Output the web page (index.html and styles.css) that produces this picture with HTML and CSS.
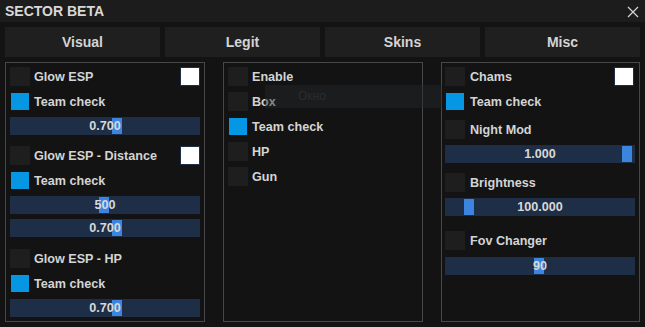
FILE: index.html
```html
<!DOCTYPE html>
<html lang="en">
  <head>
    <meta charset="UTF-8" />
    <meta name="viewport" content="width=device-width, initial-scale=1.0" />
    <title>SECTOR BETA</title>
    <link rel="stylesheet" href="styles.css">
  </head>
  <body>
    <div class="window">
      <div class="titlebar">
        <span class="title">SECTOR BETA</span>
        <svg class="close" width="12" height="12" viewBox="0 0 12 12">
          <path d="M1 1 L11 11 M11 1 L1 11" stroke="#d6d6d6" stroke-width="1.2" fill="none" />
        </svg>
      </div>

      <div class="tabs">
        <div class="tab">Visual</div>
        <div class="tab">Legit</div>
        <div class="tab">Skins</div>
        <div class="tab">Misc</div>
      </div>

      <div class="panels">
        <!-- левая колонка -->
        <div class="panel left">
          <div class="row">
            <span class="box"></span><span class="label">Glow ESP</span>
            <span class="swatch"></span>
          </div>
          <div class="row">
            <span class="box on"></span><span class="label">Team check</span>
          </div>
          <div class="slider"><span class="grab" style="left: 102px"></span><span class="value">0.700</span></div>

          <div class="row group">
            <span class="box"></span><span class="label">Glow ESP - Distance</span>
            <span class="swatch"></span>
          </div>
          <div class="row">
            <span class="box on"></span><span class="label">Team check</span>
          </div>
          <div class="slider"><span class="grab" style="left: 89px"></span><span class="value">500</span></div>
          <div class="slider next"><span class="grab" style="left: 102px"></span><span class="value">0.700</span></div>

          <div class="row group last">
            <span class="box"></span><span class="label">Glow ESP - HP</span>
          </div>
          <div class="row">
            <span class="box on"></span><span class="label">Team check</span>
          </div>
          <div class="slider"><span class="grab" style="left: 102px"></span><span class="value">0.700</span></div>
        </div>

        <!-- средняя колонка -->
        <div class="panel middle">
          <div class="row"><span class="box"></span><span class="label">Enable</span></div>
          <div class="row"><span class="box"></span><span class="label">Box</span></div>
          <div class="row"><span class="box on"></span><span class="label">Team check</span></div>
          <div class="row"><span class="box"></span><span class="label">HP</span></div>
          <div class="row"><span class="box"></span><span class="label">Gun</span></div>
        </div>

        <!-- правая колонка -->
        <div class="panel right">
          <div class="row">
            <span class="box"></span><span class="label">Chams</span>
            <span class="swatch"></span>
          </div>
          <div class="row"><span class="box on"></span><span class="label">Team check</span></div>
          <div class="row night"><span class="box"></span><span class="label">Night Mod</span></div>
          <div class="slider"><span class="grab" style="left: 177px"></span><span class="value">1.000</span></div>
          <div class="row bright"><span class="box"></span><span class="label">Brightness</span></div>
          <div class="slider"><span class="grab" style="left: 19px"></span><span class="value">100.000</span></div>
          <div class="row fov"><span class="box"></span><span class="label">Fov Changer</span></div>
          <div class="slider fov-slider"><span class="grab" style="left: 89px"></span><span class="value">90</span></div>
        </div>
      </div>

      <div class="hint">Окно</div>
    </div>
  </body>
</html>
```

FILE: styles.css
```css
* {
  box-sizing: border-box;
}
body {
  margin: 0;
  background-color: #131313;
  font-family: "Liberation Sans", Arial, sans-serif;
  color: #d2d2d2;
}
.window {
  position: relative;
  width: 645px;
  height: 327px;
  background-color: #131313;
  overflow: hidden;
}
.titlebar {
  height: 22px;
  background-color: #1c1c1c;
  display: flex;
  align-items: center;
  justify-content: space-between;
  padding: 0 6px 0 5px;
}
.title {
  font-weight: bold;
  font-size: 14px;
  color: #d8d8d8;
}
.close {
  display: block;
  margin-top: 1px;
}
.tabs {
  display: grid;
  grid-template-columns: repeat(4, 1fr);
  gap: 5px;
  margin-top: 5px;
  padding: 0 5px;
}
.tab {
  height: 30px;
  background-color: #1f1f1f;
  display: flex;
  align-items: center;
  justify-content: center;
  font-weight: bold;
  font-size: 14px;
  color: #d4d4d4;
}
.panels {
  display: flex;
  gap: 18px;
  margin-top: 5px;
  padding-left: 5px;
}
.panel {
  width: 200px;
  height: 260px;
  border: 1px solid #48484c;
  padding: 4px 4px 0 4px;
}
.panel.right {
  width: 199px;
  padding-left: 3px;
}
.row {
  height: 19px;
  display: flex;
  align-items: center;
  margin-top: 6px;
}
.row:first-child {
  margin-top: 0;
}
.row.group {
  margin-top: 11px;
}
.row.group.last {
  margin-top: 12px;
}
.row.night {
  margin-top: 9px;
}
.row.bright {
  margin-top: 10px;
}
.row.fov {
  margin-top: 15px;
}
.box {
  width: 20px;
  height: 19px;
  background-color: #1e1e1e;
  flex-shrink: 0;
}
.box.on {
  background-color: #0597e4;
  border: 1px solid #131313;
}
.label {
  margin-left: 4px;
  font-weight: bold;
  font-size: 12.6px;
  color: #d4d4d4;
  flex: 1;
}
.panel.right .label {
  margin-left: 5px;
}
.swatch {
  width: 20px;
  height: 19px;
  background-color: #ffffff;
  border: 1px solid #1e2d48;
}
.panel.right .swatch {
  margin-right: 1px;
}
.slider {
  position: relative;
  height: 18px;
  margin-top: 6px;
  background-color: #1f2e47;
  display: flex;
  align-items: center;
  justify-content: center;
}
.slider.next {
  margin-top: 5px;
}
.slider.fov-slider {
  margin-top: 7px;
}
.grab {
  position: absolute;
  top: 1px;
  bottom: 1px;
  width: 10px;
  background-color: #3b84e0;
}
.value {
  position: relative;
  font-weight: bold;
  font-size: 12.6px;
  color: #d8d8d8;
}
.hint {
  position: absolute;
  left: 265px;
  top: 85px;
  width: 177px;
  height: 23px;
  padding-left: 33px;
  background-color: rgba(38, 40, 44, 0.45);
  font-size: 12px;
  line-height: 23px;
  color: #2b2c2e;
}
```
